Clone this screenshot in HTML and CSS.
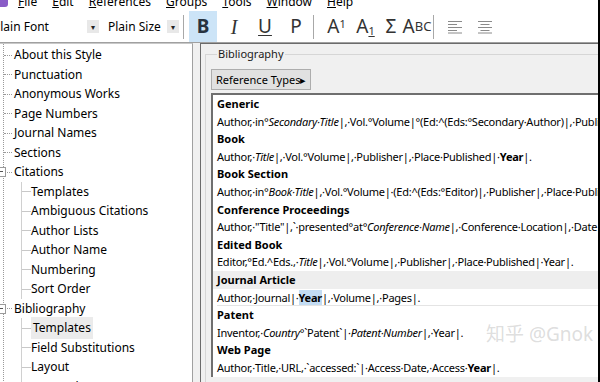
FILE: index.html
```html
<!DOCTYPE html>
<html lang="en">
<head>
    <meta charset="UTF-8">
    <title>Output Style Editor</title>
    <link rel="stylesheet" href="styles.css">
</head>
<body>
<div class="window">
    <div class="menubar">
        <span class="app-icon"></span>
        <span class="menu"><u>F</u>ile</span>
        <span class="menu"><u>E</u>dit</span>
        <span class="menu"><u>R</u>eferences</span>
        <span class="menu"><u>G</u>roups</span>
        <span class="menu"><u>T</u>ools</span>
        <span class="menu"><u>W</u>indow</span>
        <span class="menu"><u>H</u>elp</span>
    </div>

    <div class="toolbar">
        <div class="combo combo-font">Plain Font</div>
        <span class="drop">&#9662;</span>
        <div class="combo combo-size">Plain Size</div>
        <span class="drop">&#9662;</span>
        <span class="sep"></span>
        <button class="tool active bold">B</button>
        <button class="tool italic">I</button>
        <button class="tool under">U</button>
        <button class="tool">P</button>
        <span class="sep sep-2"></span>
        <button class="tool script">A<sup>1</sup></button>
        <button class="tool script">A<sub>1</sub></button>
        <button class="tool sigma">&Sigma;</button>
        <button class="tool caps">A<small>BC</small></button>
        <span class="sep sep-3"></span>
        <button class="tool align">
            <svg width="16" height="14" viewBox="0 0 16 14"><path d="M1 1.5h14M1 4.5h9M1 7.5h14M1 10.5h9M1 13h14" stroke="#8a8a8a" stroke-width="1"/></svg>
        </button>
        <button class="tool align">
            <svg width="16" height="14" viewBox="0 0 16 14"><path d="M1 1.5h14M3.5 4.5h9M1 7.5h14M3.5 10.5h9M1 13h14" stroke="#8a8a8a" stroke-width="1"/></svg>
        </button>
    </div>

    <div class="main">
        <div class="tree">
            <div class="node">About this Style</div>
            <div class="node">Punctuation</div>
            <div class="node">Anonymous Works</div>
            <div class="node">Page Numbers</div>
            <div class="node">Journal Names</div>
            <div class="node">Sections</div>
            <div class="node open">Citations</div>
            <div class="children">
                <div class="node">Templates</div>
                <div class="node">Ambiguous Citations</div>
                <div class="node">Author Lists</div>
                <div class="node">Author Name</div>
                <div class="node">Numbering</div>
                <div class="node">Sort Order</div>
            </div>
            <div class="node open">Bibliography</div>
            <div class="children">
                <div class="node"><span class="picked">Templates</span></div>
                <div class="node">Field Substitutions</div>
                <div class="node">Layout</div>
                <div class="node">Sort Order</div>
            </div>
        </div>

        <div class="panel">
            <fieldset class="group">
                <legend>Bibliography</legend>
                <button class="ref-types">Reference Types&#9656;</button>
                <div class="editor">
                    <div class="entry">
                        <div class="type">Generic</div>
                        <div class="tpl">Author,·in°<em>Secondary·Title</em>|,·Vol.°Volume|°(Ed:^(Eds:°Secondary·Author)|,·Publisher|,·Place·Published|·Year|.</div>
                    </div>
                    <div class="entry">
                        <div class="type">Book</div>
                        <div class="tpl">Author,·<em>Title</em>|,·Vol.°Volume|,·Publisher|,·Place·Published|·<b>Year</b>|.</div>
                    </div>
                    <div class="entry">
                        <div class="type">Book Section</div>
                        <div class="tpl">Author,·in°<em>Book·Title</em>|,·Vol.°Volume|·(Ed:^(Eds:°Editor)|,·Publisher|,·Place·Published|·Year|.</div>
                    </div>
                    <div class="entry">
                        <div class="type">Conference Proceedings</div>
                        <div class="tpl">Author,·"Title"|,`·presented°at°<em>Conference·Name</em>|,·Conference·Location|,·Date|.</div>
                    </div>
                    <div class="entry">
                        <div class="type">Edited Book</div>
                        <div class="tpl">Editor,°Ed.^Eds.,·<em>Title</em>|,·Vol.°Volume|,·Publisher|,·Place·Published|·Year|.</div>
                    </div>
                    <div class="entry current">
                        <div class="type">Journal Article</div>
                        <div class="tpl">Author,·Journal|·<b class="sel">Year</b>|,·Volume|,·Pages|.</div>
                    </div>
                    <div class="entry">
                        <div class="type">Patent</div>
                        <div class="tpl">Inventor,·<em>Country</em>°`Patent`|·<em>Patent·Number</em>|,·Year|.</div>
                    </div>
                    <div class="entry">
                        <div class="type">Web Page</div>
                        <div class="tpl">Author,·Title,·URL,·`accessed:`|·Access·Date,·Access·<b>Year</b>|.</div>
                    </div>
                </div>
            </fieldset>
            <div class="watermark">知乎 @Gnok</div>
        </div>
    </div>
</div>
</body>
</html>
```

FILE: styles.css
```css
* {
    margin: 0;
    padding: 0;
    box-sizing: border-box;
}

body {
    background: #000;
    font-family: "Noto Sans", "Noto Sans CJK SC", sans-serif;
    color: #000;
    overflow: hidden;
    height: 382px;
}

.window {
    width: 598px;
    height: 382px;
    background: #fff;
    overflow: hidden;
}

/* menu bar, cut off by the top of the shot */
.menubar {
    height: 9px;
    overflow: hidden;
    display: flex;
    align-items: flex-end;
    font-size: 12px;
    line-height: 16px;
    background: #fff;
}

.menubar .app-icon {
    width: 8px;
    height: 7px;
    margin-right: 10px;
    align-self: flex-start;
    background: #8a5cc7;
    border-radius: 0 0 3px 0;
}

.menu {
    margin-right: 15px;
    position: relative;
    top: 1px;
}

/* toolbar */
.toolbar {
    height: 34px;
    display: flex;
    align-items: center;
    background: #fff;
    border-bottom: 1px solid #a0a0a0;
    padding-top: 2px;
}

.combo {
    font-size: 12px;
    color: #000;
}

.combo-font {
    width: 94px;
    margin-left: -7px;
}

.combo-size {
    width: 59px;
    margin-left: 9px;
}

.drop {
    width: 12px;
    height: 13px;
    background: #e8e8e8;
    font-size: 8px;
    line-height: 13px;
    text-align: center;
    color: #222;
}

.sep {
    width: 1px;
    height: 24px;
    background: #a8a8a8;
    margin: 0 5px 0 4px;
}

.sep-2 {
    margin: 0 8px 0 0;
}

.sep-3 {
    margin: 0 8px 0 1px;
}

.tool {
    border: none;
    background: none;
    height: 31px;
    width: 28px;
    margin-right: 3px;
    font-family: "Noto Sans", sans-serif;
    font-size: 19px;
    color: #333;
    display: flex;
    align-items: center;
    justify-content: center;
    line-height: 1;
}

.tool.active {
    background: #cce4f7;
}

.tool.bold {
    font-weight: bold;
    color: #283340;
}

.tool.italic {
    font-family: "Liberation Serif", serif;
    font-style: italic;
    font-size: 20px;
}

.tool.under {
    text-decoration: underline;
    text-decoration-thickness: 1px;
    text-underline-offset: 2px;
}

.tool.script {
    width: 29px;
    margin-right: 0;
}

.tool.sigma {
    width: 22px;
    margin-right: 0;
}

.tool.caps {
    width: 30px;
    margin-right: 0;
}

.tool sup,
.tool sub {
    font-size: 11px;
}

.tool sup {
    align-self: flex-start;
    margin-top: 7px;
}

.tool sub {
    align-self: flex-end;
    margin-bottom: 6px;
    text-decoration: underline;
}

.tool.caps small {
    font-size: 13px;
}

.tool.align {
    width: 25px;
    margin-right: 5px;
}

/* body of the window */
.main {
    display: flex;
    height: 340px;
    background: #f0f0f0;
}

.tree {
    width: 193px;
    flex-shrink: 0;
    background: #fff;
    border-right: 1px solid #a0a0a0;
    border-top: 1px solid #c8c8c8;
    padding-top: 1px;
    font-size: 12px;
    position: relative;
    margin-right: 7px;
}

.tree::before {
    content: "";
    position: absolute;
    left: 3px;
    top: 0;
    bottom: 0;
    border-left: 1px dotted #9a9a9a;
}

.node {
    height: 19.5px;
    line-height: 19.5px;
    padding-left: 14px;
    position: relative;
    white-space: nowrap;
}

.node::before {
    content: "";
    position: absolute;
    left: 4px;
    top: 50%;
    width: 8px;
    border-top: 1px dotted #9a9a9a;
}

.node.open::after {
    content: "";
    position: absolute;
    left: -4px;
    top: 5px;
    width: 8px;
    height: 8px;
    border: 1px solid #9a9a9a;
    background: #fff linear-gradient(#555, #555) no-repeat 1px 3px / 5px 1px;
}

.children {
    position: relative;
}

.children::before {
    content: "";
    position: absolute;
    left: 21px;
    top: 0;
    bottom: 0;
    border-left: 1px solid #d0d0d0;
}

.children .node {
    padding-left: 31px;
}

.children .node::before {
    left: 22px;
    width: 9px;
    border-top: 1px solid #c8c8c8;
}

.picked {
    background: #ebebeb;
    padding: 2px 2px 3px;
}

.panel {
    flex: 1;
    min-width: 0;
    border-left: 1px solid #6b6b6b;
    border-top: 1px solid #6b6b6b;
    position: relative;
    padding-left: 4px;
}

.group {
    min-width: 0;
    border: none;
    border-top: 1px solid #d6d6d6;
    border-left: 1px solid #d6d6d6;
    margin-top: 3px;
    padding: 6px 0 0 5px;
    height: 400px;
}

.group legend {
    font-size: 11px;
    color: #1a1a1a;
    margin-left: 6px;
    padding: 0 1px;
    line-height: 14px;
}

.ref-types {
    font-family: "Noto Sans", sans-serif;
    font-size: 11px;
    color: #000;
    background: #e1e1e1;
    border: 1px solid #adadad;
    width: 100px;
    height: 21px;
    padding: 0 0 0 4px;
    text-align: left;
}

.editor {
    margin-top: 3px;
    background: #fff;
    border-top: 2px solid #6f6f6f;
    border-left: 2px solid #6f6f6f;
    padding: 0 0 0 4px;
    font-size: 11px;
    white-space: nowrap;
    overflow: hidden;
}

.type,
.tpl {
    height: 17.6px;
    line-height: 17.6px;
}

.type {
    font-weight: bold;
}

.tpl {
    letter-spacing: -0.25px;
}

.tpl em {
    font-style: italic;
}

.current .type {
    background: #eeeeee;
    margin-left: -4px;
    padding-left: 4px;
}

.current .tpl {
    border-bottom: 1px solid #e4e4e4;
}

.sel {
    background: #c3dcf3;
}

.watermark {
    position: absolute;
    left: 285px;
    top: 276px;
    font-size: 19px;
    line-height: 28px;
    white-space: nowrap;
    color: rgba(170, 170, 170, 0.4);
}
```
